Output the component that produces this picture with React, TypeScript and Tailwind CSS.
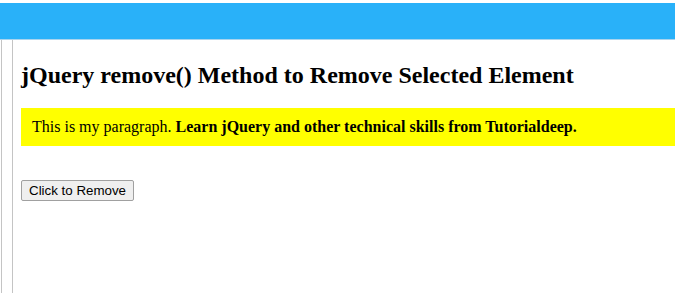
import React from 'react';

const App = () => {
  return (
    <div className="w-[675px] h-[293px] bg-white overflow-hidden font-['Liberation_Serif',serif] text-black">
      <div className="h-[3px] bg-white" />
      <div className="h-[37px] bg-[#29b1f9] border-b border-[#a9d4ee]" />
      <div className="flex h-[253px]">
        <div className="w-[1px] ml-[1px] bg-[#c4c4c4]" />
        <div className="w-[1px] ml-[10px] bg-[#c4c4c4]" />
        <main className="flex-1 pl-[8px]">
          <h1 className="mt-[21px] text-[24px] leading-[28px] font-bold">
            jQuery remove() Method to Remove Selected Element
          </h1>
          <p className="mt-[19px] bg-[#ffff00] h-[38px] pl-[11px] flex items-center text-[16px]">
            <span>
              This is my paragraph. <b>Learn jQuery and other technical skills from Tutorialdeep.</b>
            </span>
          </p>
          <button className="mt-[34px] h-[21px] px-[7px] border border-[#a0a0a0] rounded-[2px] bg-[#efefef] font-['Liberation_Sans',sans-serif] text-[13.33px] leading-none">
            Click to Remove
          </button>
        </main>
      </div>
    </div>
  );
};

export default App;
